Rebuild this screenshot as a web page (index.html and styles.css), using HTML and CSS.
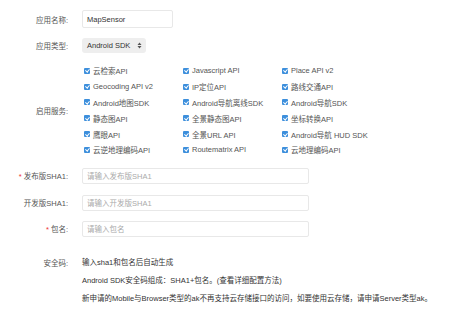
FILE: index.html
```html
<!DOCTYPE html>
<html lang="zh">
<head>
<meta charset="utf-8">
<link rel="stylesheet" href="styles.css">
</head>
<body>
<div class="form">
  <div class="row row-name">
    <div class="label">应用名称:</div>
    <div class="field"><div class="input name-input"><span class="value">MapSensor</span></div></div>
  </div>
  <div class="row row-type">
    <div class="label">应用类型:</div>
    <div class="field">
      <div class="select"><span class="value">Android SDK</span>
        <svg class="updown" width="5" height="7" viewBox="0 0 5 7"><path d="M0.5 3 L2.5 0.5 L4.5 3 Z M0.5 4 L2.5 6.5 L4.5 4 Z" fill="#555"/></svg>
      </div>
    </div>
  </div>
  <div class="row row-services">
    <div class="label">启用服务:</div>
    <div class="field">
      <div class="checks">
        <label class="check"><span class="box"></span>云检索API</label>
        <label class="check"><span class="box"></span>Javascript API</label>
        <label class="check"><span class="box"></span>Place API v2</label>
        <label class="check"><span class="box"></span>Geocoding API v2</label>
        <label class="check"><span class="box"></span>IP定位API</label>
        <label class="check"><span class="box"></span>路线交通API</label>
        <label class="check"><span class="box"></span>Android地图SDK</label>
        <label class="check"><span class="box"></span>Android导航离线SDK</label>
        <label class="check"><span class="box"></span>Android导航SDK</label>
        <label class="check"><span class="box"></span>静态图API</label>
        <label class="check"><span class="box"></span>全景静态图API</label>
        <label class="check"><span class="box"></span>坐标转换API</label>
        <label class="check"><span class="box"></span>鹰眼API</label>
        <label class="check"><span class="box"></span>全景URL API</label>
        <label class="check"><span class="box"></span>Android导航 HUD SDK</label>
        <label class="check"><span class="box"></span>云逆地理编码API</label>
        <label class="check"><span class="box"></span>Routematrix API</label>
        <label class="check"><span class="box"></span>云地理编码API</label>
      </div>
    </div>
  </div>
  <div class="row row-sha1">
    <div class="label"><span class="star">*</span> 发布版SHA1:</div>
    <div class="field"><div class="input wide"><span class="ph">请输入发布版SHA1</span></div></div>
  </div>
  <div class="row row-sha2">
    <div class="label">开发版SHA1:</div>
    <div class="field"><div class="input wide"><span class="ph">请输入开发版SHA1</span></div></div>
  </div>
  <div class="row row-pkg">
    <div class="label"><span class="star">*</span> 包名:</div>
    <div class="field"><div class="input wide"><span class="ph">请输入包名</span></div></div>
  </div>
  <div class="row row-code">
    <div class="label">安全码:</div>
    <div class="field text">输入sha1和包名后自动生成</div>
  </div>
  <div class="row row-note">
    <div class="label"></div>
    <div class="field text">Android SDK安全码组成：SHA1+包名。(查看详细配置方法)</div>
  </div>
  <div class="row row-note">
    <div class="label"></div>
    <div class="field text">新申请的Mobile与Browser类型的ak不再支持云存储接口的访问，如要使用云存储，请申请Server类型ak。</div>
  </div>
</div>
</body>
</html>
```

FILE: styles.css
```css
html, body {
  margin: 0;
  padding: 0;
  background: #ffffff;
}
body {
  font-family: "Liberation Sans", "Noto Sans CJK SC", sans-serif;
  font-size: 7.5px;
  color: #444;
  width: 474px;
  height: 315px;
  overflow: hidden;
}
.form {
  display: flex;
  flex-direction: column;
  padding-top: 10px;
}
.row {
  display: flex;
  align-items: center;
}
.label {
  width: 68px;
  flex: none;
  text-align: right;
  color: #555;
  white-space: nowrap;
}
.star {
  color: #e33;
}
.field {
  margin-left: 14px;
  flex: none;
}
.input {
  box-sizing: border-box;
  height: 18px;
  border: 1px solid #e8e8e8;
  border-radius: 2px;
  display: flex;
  align-items: center;
  padding-left: 4px;
  background: #fff;
}
.name-input {
  width: 91px;
}
.value {
  color: #333;
}
.ph {
  color: #aaa;
}
.row-type {
  margin-top: 10px;
}
.select {
  box-sizing: border-box;
  width: 64px;
  height: 15px;
  background: #eeeeee;
  border-radius: 3px;
  display: flex;
  align-items: center;
  padding-left: 5px;
  padding-right: 4px;
  justify-content: space-between;
}
.row-services {
  margin-top: 10px;
}
.checks {
  display: grid;
  grid-template-columns: 99px 99px 99px;
  grid-auto-rows: 15.8px;
  padding-left: 2px;
}
.check {
  display: flex;
  align-items: center;
  color: #555;
  white-space: nowrap;
}
.box {
  width: 6px;
  height: 6px;
  border-radius: 1px;
  background: #3d8fdc;
  margin-right: 3px;
  position: relative;
  flex: none;
}
.box::after {
  content: "";
  position: absolute;
  left: 1.6px;
  top: 0.6px;
  width: 1.5px;
  height: 3px;
  border-right: 1px solid #fff;
  border-bottom: 1px solid #fff;
  transform: rotate(40deg);
}
.wide {
  width: 227px;
  height: 16px;
}
.row-sha1 {
  margin-top: 10px;
}
.row-sha2 {
  margin-top: 11px;
}
.row-pkg {
  margin-top: 10px;
}
.text {
  line-height: 12px;
  color: #333;
  white-space: nowrap;
}
.row-code {
  margin-top: 20px;
}
.row-note {
  margin-top: 6px;
}
```
